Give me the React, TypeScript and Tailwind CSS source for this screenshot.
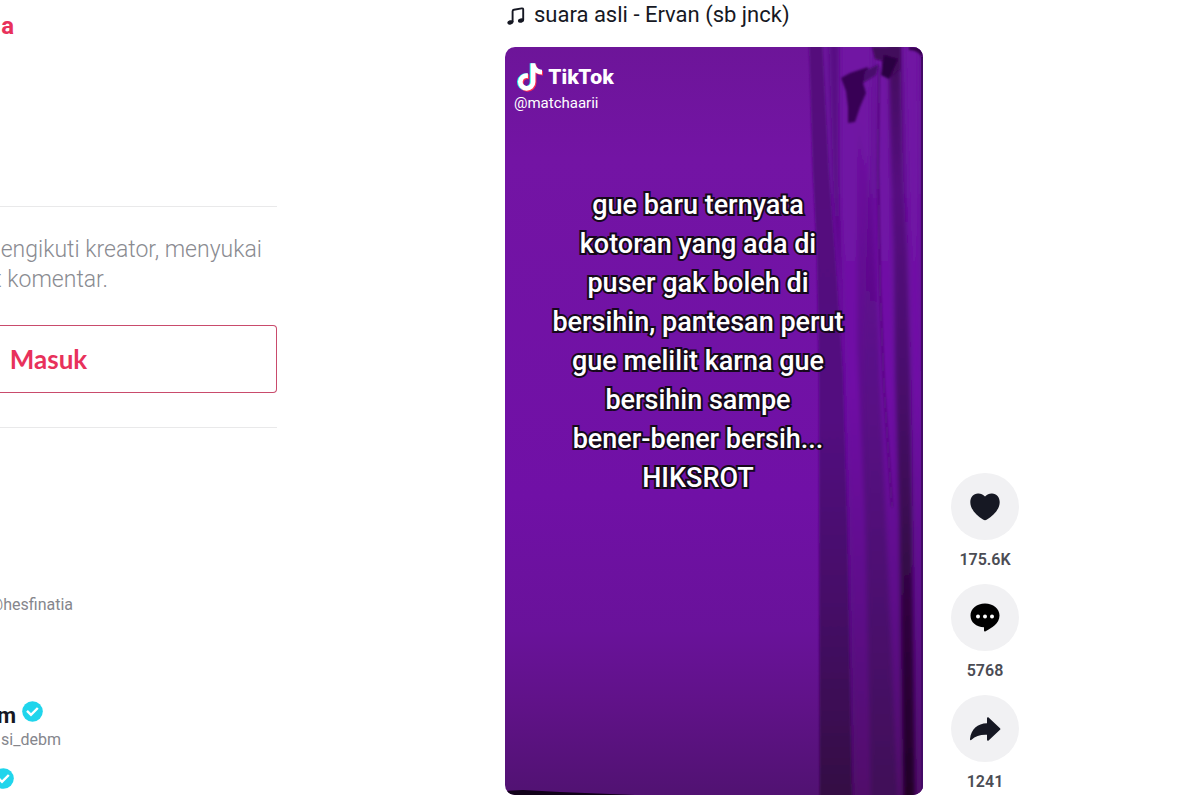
import React from 'react';
import { FaTiktok } from 'react-icons/fa';

const captionLines = [
  'gue baru ternyata',
  'kotoran yang ada di',
  'puser gak boleh di',
  'bersihin, pantesan perut',
  'gue melilit karna gue',
  'bersihin sampe',
  'bener-bener bersih...',
  'HIKSROT',
];

function VerifiedBadge() {
  return (
    <svg viewBox="0 0 21 21" className="h-[21px] w-[21px] shrink-0" aria-label="Verified">
      <circle cx="10.5" cy="10.5" r="10.3" fill="#20d5ec" />
      <path d="M5 9.8l4 4 6.8-6.8" fill="none" stroke="#fff" strokeWidth="2.4" />
    </svg>
  );
}

function MusicIcon() {
  return (
    <svg viewBox="0 0 18 18" className="h-[18px] w-[18px] shrink-0" aria-hidden="true">
      <path
        d="M5.6 15V4.2Q5.6 2.9 6.9 2.7L14.8 1.4Q16.2 1.2 16.2 2.5V13"
        fill="none"
        stroke="#161823"
        strokeWidth="1.9"
      />
      <ellipse cx="3.4" cy="15.4" rx="3.1" ry="2.1" transform="rotate(-15 3.4 15.4)" fill="#161823" />
      <ellipse cx="14" cy="13.6" rx="3.1" ry="2.1" transform="rotate(-15 14 13.6)" fill="#161823" />
    </svg>
  );
}

function HeartIcon() {
  return (
    <svg viewBox="0 0 30 28" className="h-7 w-[30px]" aria-hidden="true">
      <path
        d="M15 3.5C17 1 19.5.3 22 .4 26.6.6 29.7 4.3 29.7 9c0 7.6-6.5 13.5-12.7 17.6q-2 1.3-4 0C6.8 22.5.3 16.6.3 9 .3 4.3 3.4.6 8 .4c2.5-.1 5 .6 7 3.1z"
        fill="#161823"
      />
    </svg>
  );
}

function CommentIcon() {
  return (
    <svg viewBox="0 0 30 29" className="h-[29px] w-[30px]" aria-hidden="true">
      <path
        d="M15 .5C6.7.5.5 5.6.5 12.5.5 19.4 6.3 24 14 24.3v3.2c0 1 .8 1.3 1.6.8C21.5 25 29.5 20.5 29.5 12.5 29.5 5.6 23.3.5 15 .5z"
        fill="#000"
      />
      <circle cx="8" cy="13.5" r="2" fill="#fff" />
      <circle cx="15" cy="13.5" r="2" fill="#fff" />
      <circle cx="22" cy="13.5" r="2" fill="#fff" />
    </svg>
  );
}

function ShareIcon() {
  return (
    <svg viewBox="0 0 32 24" className="h-6 w-8" aria-hidden="true">
      <path
        d="M18 1.2c0-1 .9-1.3 1.6-.7L31 11.2q.8.8 0 1.6L19.6 23.5c-.7.6-1.6.3-1.6-.7v-5C11.5 17.5 6.5 19 2.5 22.8c-.8.7-1.6.3-1.5-.7C2 12 8.5 6.5 18 6.2z"
        fill="#161823"
      />
    </svg>
  );
}

// Purple wall with a curtain hanging on the right side
function VideoScene() {
  return (
    <svg
      viewBox="0 0 418 748"
      preserveAspectRatio="none"
      className="block h-full w-full"
      aria-hidden="true"
    >
      <defs>
        <linearGradient id="wall" x1="0" y1="0" x2="0" y2="1">
          <stop offset="0" stopColor="#6d1599" />
          <stop offset="0.15" stopColor="#7314a4" />
          <stop offset="0.6" stopColor="#7010a6" />
          <stop offset="0.78" stopColor="#69129a" />
          <stop offset="0.88" stopColor="#601288" />
          <stop offset="1" stopColor="#511272" />
        </linearGradient>
        <linearGradient id="cloth" x1="0" y1="0" x2="0" y2="1">
          <stop offset="0" stopColor="#6a139a" />
          <stop offset="0.5" stopColor="#66109b" />
          <stop offset="0.75" stopColor="#570f83" />
          <stop offset="1" stopColor="#471061" />
        </linearGradient>
        <linearGradient id="fold" x1="0" y1="0" x2="0" y2="1">
          <stop offset="0" stopColor="#550e7c" />
          <stop offset="0.5" stopColor="#530b80" />
          <stop offset="0.75" stopColor="#450b66" />
          <stop offset="1" stopColor="#330a42" />
        </linearGradient>
        <linearGradient id="deep" x1="0" y1="0" x2="0" y2="1">
          <stop offset="0" stopColor="#400759" />
          <stop offset="0.2" stopColor="#560e80" />
          <stop offset="0.45" stopColor="#490a6c" />
          <stop offset="0.75" stopColor="#30063f" />
          <stop offset="1" stopColor="#200626" />
        </linearGradient>
        <linearGradient id="glow" x1="0" y1="0" x2="0" y2="1">
          <stop offset="0" stopColor="#7113a3" />
          <stop offset="0.45" stopColor="#7011a6" />
          <stop offset="0.75" stopColor="#5d1088" />
          <stop offset="1" stopColor="#501069" />
        </linearGradient>
        <linearGradient id="shade" x1="0" y1="0" x2="0" y2="1">
          <stop offset="0" stopColor="#500c75" stopOpacity="0" />
          <stop offset="0.35" stopColor="#560c82" stopOpacity="0.7" />
          <stop offset="1" stopColor="#3d0c54" stopOpacity="0.8" />
        </linearGradient>
        <filter id="soft" x="-30%" y="-5%" width="160%" height="110%">
          <feGaussianBlur stdDeviation="2 4" />
        </filter>
        <filter id="edge" x="-20%" y="-20%" width="140%" height="140%">
          <feGaussianBlur stdDeviation="1" />
        </filter>
      </defs>
      <rect width="418" height="748" fill="url(#wall)" />
      <path d="M304 -9L308 126 312 206 314 326 315 757H428V-9z" fill="url(#cloth)" filter="url(#edge)" />
      <path
        d="M304 -9H317L324 126 330 206 338 326 342 473 347 757H315L314 326 312 206 308 126z"
        fill="url(#fold)"
        filter="url(#edge)"
      />
      <path d="M324 -9H334L333 120 336 240 329 150z" fill="#580e84" filter="url(#soft)" />
      <g filter="url(#soft)">
        <path d="M336 -9H366L364 130 358 300 362 520 366 757H350L345 473 341 326 336 150z" fill="url(#glow)" />
        <path d="M352 60L366 150 376 326 384 473 394 757H366L360 473 352 300z" fill="url(#shade)" />
        <path d="M372 -9H383L386 206 389 326 394 473 399 757H393L381 473 375 326 373 206z" fill="url(#glow)" />
        <path d="M383 -9H395L398 126 402 206 405 326 407 473 410 757H398L394 473 390 326 389 206 386 126z" fill="url(#deep)" />
        <path d="M400 -9H413L414 200 420 757H412L409 400 405 200z" fill="url(#glow)" />
      </g>
      <path d="M374 20L373 120 375 240 379 340 387 460" fill="none" stroke="#540b7c" strokeWidth="2" filter="url(#edge)" />
      <path d="M417 10V748" stroke="#430a66" strokeWidth="2" />
      <g filter="url(#edge)">
        <path d="M336 31L345 26 363 20 362 31 358 36 361 46 355 60 350 75 343 76 343 60 341 44z" fill="#380554" />
        <path d="M360 24L374 17 371 28 358 36z" fill="#490b6d" />
        <path d="M367 0H395V22L385 31 377 28 377 14 370 12z" fill="#42075c" />
        <path d="M379 8L393 12 384 32 376 28z" fill="#2b0443" />
        <path d="M404 0H418V12Q414 3 404 3z" fill="#36064d" />
      </g>
      <path d="M0 748V744L18 743 55 745 130 748z" fill="#12021a" />
    </svg>
  );
}

function TikTokLogo() {
  return (
    <span className="relative block h-7 w-6">
      <FaTiktok className="absolute top-0 left-0 h-7 w-6 -translate-x-px text-[#25f4ee]" />
      <FaTiktok className="absolute top-0 left-0 h-7 w-6 translate-x-px translate-y-px text-[#fe2c55]" />
      <FaTiktok className="absolute top-0 left-0 h-7 w-6 text-white" />
    </span>
  );
}

type ActionProps = {
  label: string;
  count: string;
  children: React.ReactNode;
};

function ActionButton({ label, count, children }: ActionProps) {
  return (
    <div className="flex flex-col items-center">
      <button
        type="button"
        aria-label={label}
        className="flex h-[67px] w-[68px] items-center justify-center rounded-full bg-[#f1f1f3]"
      >
        {children}
      </button>
      <span className="mt-2 text-base leading-6 font-semibold text-[#4b4c54]">{count}</span>
    </div>
  );
}

function Sidebar() {
  return (
    <aside className="w-[277px] shrink-0 overflow-hidden whitespace-nowrap">
      <nav className="flex h-[206px] pt-3">
        <a href="#" className="flex h-7 w-[14px] items-center justify-end text-2xl font-bold text-[#e8315b]">
          a
        </a>
      </nav>

      <section className="border-y border-[#e9e9ea] pt-7 pb-[34px]">
        <div className="text-[23px] leading-[30px] font-light text-[#8a8b91]">
          <p className="flex w-[262px] justify-end">engikuti kreator, menyukai</p>
          <p className="flex w-[108px] justify-end">t komentar.</p>
        </div>
        <button
          type="button"
          className="mt-[30px] block h-[68px] w-full rounded-r border border-l-0 border-[#c94b6c] pr-[179px] text-center font-['Lato',sans-serif] text-[26px] font-bold text-[#e8315b]"
        >
          Masuk
        </button>
      </section>

      <section className="pt-[167px] text-base leading-5 text-[#85868c]">
        <a href="#" className="flex w-[73px] justify-end">
          @hesfinatia
        </a>
        <a href="#" className="mt-[86px] block">
          <span className="flex h-[29px] w-[43px] items-start justify-end gap-[6px]">
            <span className="pt-[3px] text-[22px] leading-6 font-bold text-[#161823]">m</span>
            <VerifiedBadge />
          </span>
          <span className="flex w-[61px] justify-end">si_debm</span>
        </a>
        <a href="#" className="mt-[18px] flex w-[14px] justify-end">
          <VerifiedBadge />
        </a>
      </section>
    </aside>
  );
}

function App() {
  return (
    <div className="flex min-h-screen overflow-hidden bg-white font-['Roboto','Liberation_Sans',sans-serif]">
      <Sidebar />
      <main className="flex-1 pl-[228px]">
        <a href="#" className="flex h-[47px] items-start gap-[9px] pl-[2px] text-[22px] text-[#161823]">
          <span className="pt-[7px]">
            <MusicIcon />
          </span>
          <span className="leading-[30px] whitespace-nowrap">suara asli - Ervan (sb jnck)</span>
        </a>

        <div className="flex items-end gap-7">
          <div className="relative aspect-[418/748] w-[418px] shrink-0 overflow-hidden rounded-[10px]">
            <VideoScene />
            <div className="absolute top-4 left-[9px] text-white">
              <div className="flex items-center gap-[6px] pl-1">
                <TikTokLogo />
                <span className="font-['Inter',sans-serif] text-[20px] leading-7 font-extrabold">TikTok</span>
              </div>
              <p className="text-[15px] leading-6">@matchaarii</p>
            </div>
            <p className="absolute top-[139px] left-0 w-[386px] text-center text-[27px] leading-[39px] font-medium whitespace-nowrap text-white [paint-order:stroke_fill] [-webkit-text-stroke:4px_#16091c]">
              {captionLines.map((line) => (
                <span key={line} className="block">
                  {line}
                </span>
              ))}
            </p>
          </div>

          <div className="flex flex-col gap-3 pb-px">
            <ActionButton label="Like" count="175.6K">
              <HeartIcon />
            </ActionButton>
            <ActionButton label="Comment" count="5768">
              <CommentIcon />
            </ActionButton>
            <ActionButton label="Share" count="1241">
              <ShareIcon />
            </ActionButton>
          </div>
        </div>
      </main>
    </div>
  );
}

export default App;
